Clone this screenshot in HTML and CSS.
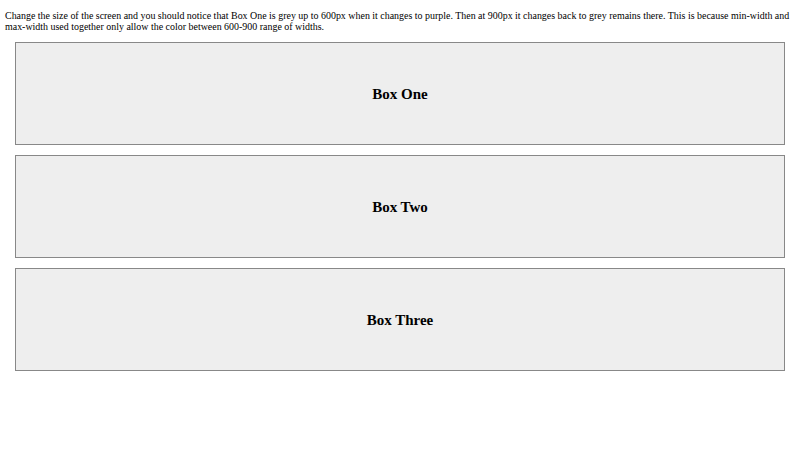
FILE: index.html
```html
<!DOCTYPE html>
<html>
<head>
<meta charset="utf-8">
<link rel="stylesheet" href="styles.css">
</head>
<body>
<p class="intro">Change the size of the screen and you should notice that Box One is grey up to 600px when it changes to purple. Then at 900px it changes back to grey remains there. This is because min-width and max-width used together only allow the color between 600-900 range of widths.</p>
<div class="boxes">
  <div class="box">Box One</div>
  <div class="box">Box Two</div>
  <div class="box">Box Three</div>
</div>
</body>
</html>
```
FILE: styles.css
```css
body {
  margin: 0;
  padding: 10px 5px 0;
  font-family: "Liberation Serif", "Times New Roman", serif;
  color: #000;
  background: #fff;
}
.intro {
  margin: 0 0 10px;
  font-size: 9.95px;
  line-height: 11px;
}
.boxes {
  display: flex;
  flex-direction: column;
  gap: 10px;
  padding: 0 10px;
}
.box {
  height: 100px;
  padding-top: 1px;
  border: 1px solid #888;
  background: #eeeeee;
  display: flex;
  align-items: center;
  justify-content: center;
  font-weight: bold;
  font-size: 15px;
}
```
